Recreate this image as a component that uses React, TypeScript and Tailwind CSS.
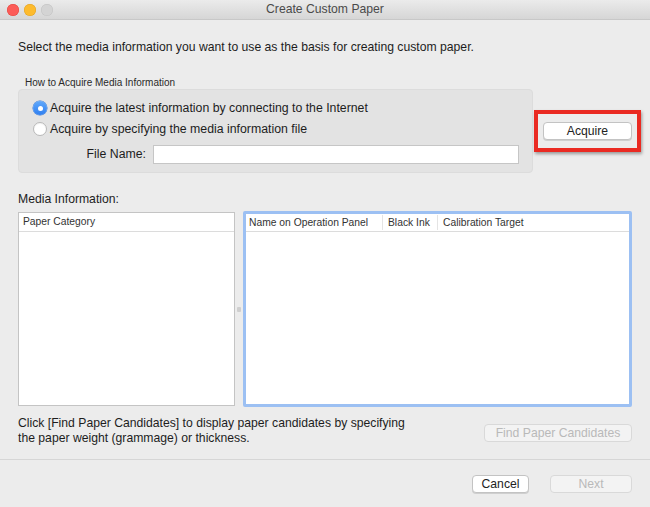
import React from "react";

function Radio(props: { checked?: boolean }) {
  return props.checked ? (
    <span className="flex h-[14px] w-[14px] items-center justify-center rounded-full bg-gradient-to-b from-[#5fa8fb] to-[#2f7ff0] shadow-[0_0_0_0.5px_#2d73d8]">
      <span className="h-[5px] w-[5px] rounded-full bg-white" />
    </span>
  ) : (
    <span className="h-[14px] w-[14px] rounded-full border border-[#b8b8b8] bg-white shadow-[inset_0_1px_1px_rgba(0,0,0,0.05)]" />
  );
}

function MacButton(props: { label: string; disabled?: boolean; className?: string }) {
  return (
    <button
      type="button"
      className={
        "flex h-[18px] shrink-0 items-center justify-center rounded-[4px] border text-[12.2px] leading-none " +
        (props.disabled
          ? "border-[#d9d9d9] bg-[#f3f3f3] text-[#b9b9b9]"
          : "border-[#c3c3c3] bg-white text-[#222] shadow-[0_1px_0_rgba(0,0,0,0.12)]") +
        " " +
        (props.className ?? "")
      }
    >
      {props.label}
    </button>
  );
}

export default function App() {
  return (
    <div
      className="flex h-[507px] w-[650px] flex-col overflow-hidden bg-[#ececec] text-[#1d1d1d]"
      style={{ fontFamily: '"Liberation Sans", Arial, sans-serif' }}
    >
      {/* title bar */}
      <div className="relative flex h-[20px] shrink-0 items-center justify-center border-b border-[#c8c8c8] bg-gradient-to-b from-[#ebebeb] to-[#d6d6d6]">
        <div className="absolute left-[7px] top-[4px] flex gap-[5px]">
          <span className="h-[12px] w-[12px] rounded-full bg-[#fc5b57] shadow-[inset_0_0_0_0.5px_#e2463f]" />
          <span className="h-[12px] w-[12px] rounded-full bg-[#fdbb2d] shadow-[inset_0_0_0_0.5px_#e0a024]" />
          <span className="h-[12px] w-[12px] rounded-full bg-[#d4d4d4] shadow-[inset_0_0_0_0.5px_#c2c2c2]" />
        </div>
        <span className="text-[12.2px] text-[#4a4a4a]">Create Custom Paper</span>
      </div>

      <div className="flex flex-1 flex-col px-[18px]">
        <div className="mt-[19px] text-[12.2px] leading-[16px]">
          Select the media information you want to use as the basis for creating custom paper.
        </div>

        <div className="mt-[22px] pl-[7px] text-[10px] leading-[12px] text-[#2a2a2a]">
          How to Acquire Media Information
        </div>

        <div className="flex items-start">
          <div className="h-[84px] w-[515px] shrink-0 rounded-[4px] border border-[#dcdcdc] bg-[#e3e3e3] pl-[14px] pt-[10px]">
            <label className="flex h-[16px] items-center gap-[3px] text-[12.3px]">
              <Radio checked />
              <span>Acquire the latest information by connecting to the Internet</span>
            </label>
            <label className="mt-[5px] flex h-[16px] items-center gap-[3px] text-[12.3px]">
              <Radio />
              <span>Acquire by specifying the media information file</span>
            </label>
            <div className="mt-[8px] flex items-center">
              <span className="w-[120px] shrink-0 pr-[7px] text-right text-[12.3px]">File Name:</span>
              <div className="h-[19px] w-[366px] border border-[#c6c6c6] bg-white" />
            </div>
          </div>
          <div className="mt-[21px] ml-px shrink-0 border-[4px] border-[#ea2a22] px-[5px] py-[8px] shadow-[1px_2px_3px_rgba(0,0,0,0.35)]">
            <MacButton label="Acquire" className="w-[89px]" />
          </div>
        </div>

        <div className="mt-[18px] text-[12.2px] leading-[16px]">Media Information:</div>

        <div className="mt-[4px] flex h-[196px] items-stretch">
          <div className="mt-px mb-px flex w-[217px] flex-col border border-[#c4c4c4] bg-white">
            <div className="flex h-[19px] items-center border-b border-[#dcdcdc] px-[4px] text-[10.3px] text-[#333]">
              Paper Category
            </div>
          </div>
          <div className="flex w-[8px] items-center justify-center">
            <span className="h-[5px] w-[4px] rounded-[1px] bg-[#cfcfcf]" />
          </div>
          <div className="flex flex-1 flex-col rounded-[2px] border-[3px] border-[#9cc0f3] bg-white">
            <div className="flex h-[18px] items-center border-b border-[#dcdcdc] text-[10.3px] text-[#333]">
              <span className="w-[137px] border-r border-[#e4e4e4] pl-[3px]">Name on Operation Panel</span>
              <span className="w-[55px] border-r border-[#e4e4e4] pl-[5px]">Black Ink</span>
              <span className="pl-[5px]">Calibration Target</span>
            </div>
          </div>
        </div>

        <div className="mt-[9px] flex items-start justify-between">
          <div className="text-[12.2px] leading-[15px]">
            Click [Find Paper Candidates] to display paper candidates by specifying
            <br />
            the paper weight (grammage) or thickness.
          </div>
          <MacButton label="Find Paper Candidates" disabled className="mt-[8px] w-[148px]" />
        </div>
      </div>

      <div className="mb-[15px] border-t border-[#d6d6d6]" />
      <div className="flex justify-end gap-[21px] pr-[18px] pb-[14px]">
        <MacButton label="Cancel" className="w-[57px]" />
        <MacButton label="Next" disabled className="w-[82px]" />
      </div>
    </div>
  );
}
